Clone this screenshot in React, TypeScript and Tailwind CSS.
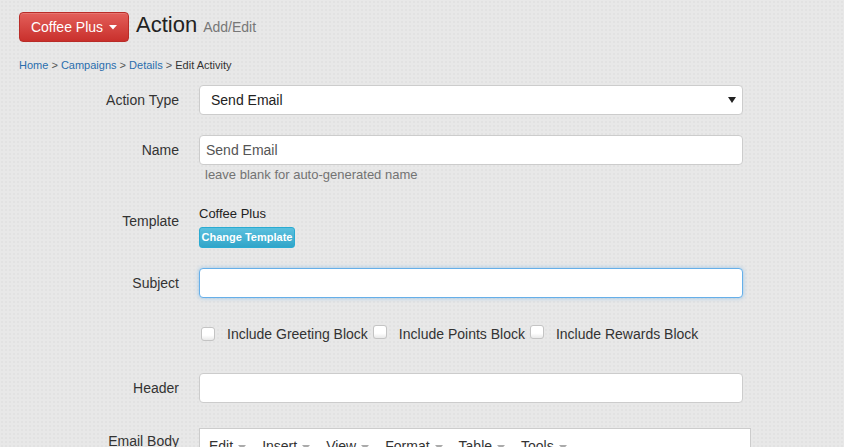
import React from "react";

const Caret = ({ color = "#fff" }: { color?: string }) => (
  <svg width="8" height="5" viewBox="0 0 8 5" className="inline-block">
    <path d="M0 0 L8 0 L4 4.5 Z" fill={color} />
  </svg>
);

const Checkbox = () => (
  <span className="inline-block w-[14px] h-[14px] rounded-[3px] border border-[#c4c4c4] bg-[linear-gradient(#ffffff,#ffffff_60%,#e9e9e9)]" />
);

export default function App() {
  const menu = ["Edit", "Insert", "View", "Format", "Table", "Tools"];
  return (
    <div className="min-h-screen bg-[#e8e8e8] [background-image:radial-gradient(#e2e2e2_1px,transparent_1px)] [background-size:4px_4px] font-['Liberation_Sans',Arial,sans-serif] text-[#333] overflow-hidden">
      <div className="pt-[12px] pl-[19px] flex items-baseline">
        <div className="h-[30px] w-[110px] rounded-[4px] border border-[#b92c28] bg-[linear-gradient(#e35f5a,#c9302c)] text-white text-[14px] flex items-center justify-center gap-[6px] shadow-[inset_0_1px_0_rgba(255,255,255,0.15)]">
          <span>Coffee Plus</span>
          <Caret />
        </div>
        <span className="ml-[7px] text-[22px] leading-none text-[#222]">Action</span>
        <span className="ml-[6px] text-[14px] text-[#777]">Add/Edit</span>
      </div>

      <div className="mt-[15px] pl-[19px] text-[11px] leading-[16px]">
        <span className="text-[#2a6ead]">Home</span>
        <span className="text-[#555]"> &gt; </span>
        <span className="text-[#2a6ead]">Campaigns</span>
        <span className="text-[#555]"> &gt; </span>
        <span className="text-[#2a6ead]">Details</span>
        <span className="text-[#555]"> &gt; </span>
        <span className="text-[#333]">Edit Activity</span>
      </div>

      {/* Action Type */}
      <div className="mt-[12px] flex">
        <div className="w-[179px] text-right text-[14px] leading-[30px]">Action Type</div>
        <div className="ml-[20px] w-[544px] h-[30px] bg-white border border-[#ccc] rounded-[4px] flex items-center justify-between pl-[11px] pr-[6px] text-[14px] text-[#222]">
          <span>Send Email</span>
          <svg width="8" height="6" viewBox="0 0 8 6"><path d="M0 0 L8 0 L4 6 Z" fill="#222" /></svg>
        </div>
      </div>

      {/* Name */}
      <div className="mt-[20px] flex">
        <div className="w-[179px] text-right text-[14px] leading-[30px]">Name</div>
        <div className="ml-[20px]">
          <div className="w-[544px] h-[30px] bg-white border border-[#ccc] rounded-[4px] flex items-center pl-[6px] text-[14px] text-[#555]">
            Send Email
          </div>
          <div className="mt-[2px] pl-[6px] text-[13px] leading-[16px] text-[#737373]">
            leave blank for auto-generated name
          </div>
        </div>
      </div>

      {/* Template */}
      <div className="mt-[23px] flex">
        <div className="w-[179px] text-right text-[14px] leading-[16px] pt-[7px]">Template</div>
        <div className="ml-[20px]">
          <div className="text-[13px] leading-[16px] text-[#222]">Coffee Plus</div>
          <div className="mt-[5px] w-[96px] h-[21px] rounded-[3px] border border-[#2aabd2] bg-[linear-gradient(#5bc0de,#31a5c9)] text-white text-[11px] font-bold flex items-center justify-center">
            Change Template
          </div>
        </div>
      </div>

      {/* Subject */}
      <div className="mt-[20px] flex">
        <div className="w-[179px] text-right text-[14px] leading-[30px]">Subject</div>
        <div className="ml-[20px] w-[544px] h-[30px] bg-white border border-[#66afe9] rounded-[4px] shadow-[0_0_4px_rgba(102,175,233,0.6)]" />
      </div>

      {/* Checkboxes */}
      <div className="mt-[27px] flex items-center text-[14px] leading-[16px]">
        <div className="w-[201px]" />
        <Checkbox />
        <span className="ml-[12px]">Include Greeting Block</span>
        <span className="ml-[5px]"><Checkbox /></span>
        <span className="ml-[12px]">Include Points Block</span>
        <span className="ml-[5px]"><Checkbox /></span>
        <span className="ml-[12px]">Include Rewards Block</span>
      </div>

      {/* Header */}
      <div className="mt-[31px] flex">
        <div className="w-[179px] text-right text-[14px] leading-[30px]">Header</div>
        <div className="ml-[20px] w-[544px] h-[30px] bg-white border border-[#ccc] rounded-[4px]" />
      </div>

      {/* Email Body */}
      <div className="mt-[25px] flex">
        <div className="w-[179px] text-right text-[14px] leading-[16px] pt-[5px]">Email Body</div>
        <div className="ml-[20px] w-[552px] h-[60px] bg-white border border-[#ccc] border-b-0">
          <div className="flex items-center pl-[9px] pt-[9px] text-[14px] leading-[16px] text-[#333]">
            {menu.map((m) => (
              <span key={m} className="flex items-center mr-[16px]">
                <span>{m}</span>
                <span className="ml-[5px]"><Caret color="#aaa" /></span>
              </span>
            ))}
          </div>
        </div>
      </div>
    </div>
  );
}
